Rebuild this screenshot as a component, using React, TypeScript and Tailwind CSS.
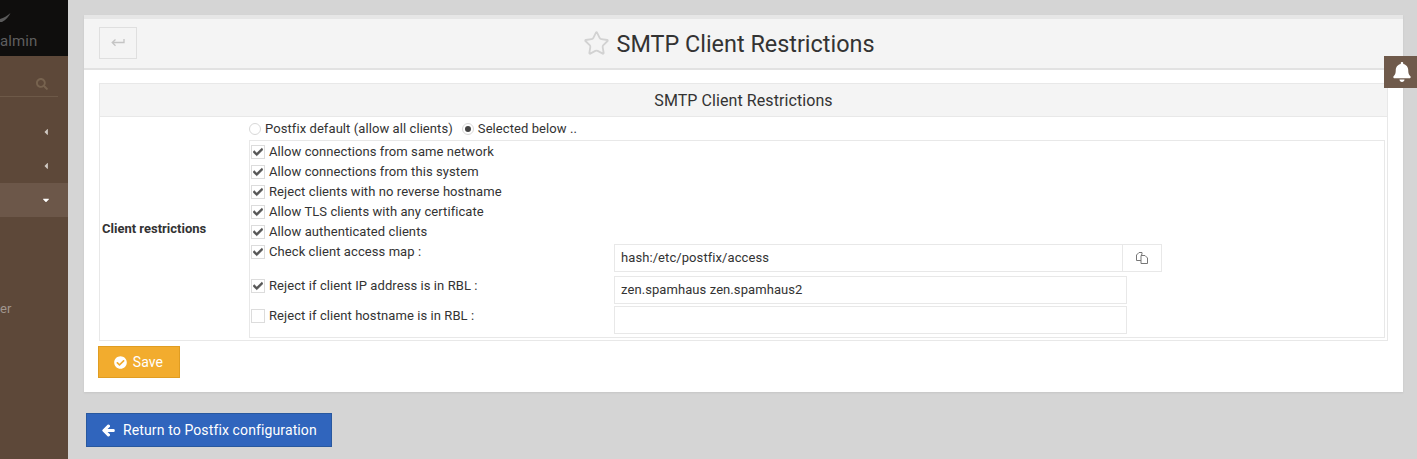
import React from 'react';
import { FaArrowLeft, FaBell, FaCaretDown, FaCaretLeft, FaCheck, FaCheckCircle, FaSearch } from 'react-icons/fa';
import { Star } from 'lucide-react';

const Check: React.FC<{ checked?: boolean }> = ({ checked = true }) => (
  <span className="w-[14px] h-[14px] border border-[#dcdcdc] bg-white flex items-center justify-center shrink-0">
    {checked && <FaCheck className="w-[10px] h-[10px] text-[#555]" stroke="currentColor" strokeWidth={30} />}
  </span>
);

const Radio: React.FC<{ checked?: boolean }> = ({ checked }) => (
  <span className="w-[12px] h-[12px] rounded-full border border-[#d8d8d8] bg-white flex items-center justify-center shrink-0">
    {checked && <span className="w-[6px] h-[6px] rounded-full bg-[#444]" />}
  </span>
);

const options = [
  'Allow connections from same network',
  'Allow connections from this system',
  'Reject clients with no reverse hostname',
  'Allow TLS clients with any certificate',
  'Allow authenticated clients',
];

const Sidebar = () => (
  <div className="w-[68px] shrink-0 bg-[#5d4839] flex flex-col overflow-hidden">
    <div className="h-[56px] bg-[#0f0e0d] relative">
      <svg viewBox="0 0 11 10" className="w-[11px] h-[10px] absolute left-0 top-[12px]">
        <path d="M0 7 C4 6 7 4 10.5 1 C9 4 6 8 2 10 L0 10 Z" fill="#5a5a5a" />
      </svg>
      <div className="pt-[31px] text-[15px] leading-[20px] text-[#5f5f5f]">almin</div>
    </div>
    <div className="h-[41px] flex items-center justify-end border-b border-[#6d5948] mr-[10px]">
      <FaSearch className="w-[12px] h-[12px] text-[#77634f] mr-[10px] mt-[16px]" />
    </div>
    <div className="h-[35px] mt-[17px] flex items-center justify-end pr-[18px]">
      <FaCaretLeft className="w-[8px] h-[10px] text-[#cfc8c2]" />
    </div>
    <div className="h-[33px] flex items-center justify-end pr-[18px]">
      <FaCaretLeft className="w-[8px] h-[10px] text-[#cfc8c2]" />
    </div>
    <div className="h-[34px] mt-[1px] bg-[#6c5749] flex items-center justify-end pr-[17px]">
      <FaCaretDown className="w-[10px] h-[10px] text-white" />
    </div>
    <div className="pt-[83px] text-[13px] leading-[18px] text-[#a0968e]">er</div>
  </div>
);

export default function App() {
  return (
    <div className="h-[459px] w-[1417px] overflow-hidden flex bg-[#d5d5d5] text-[13px] tracking-[0.08px] text-[#333] relative font-['Roboto',sans-serif]">
      <Sidebar />
      <div className="flex-1 pl-[16px] pr-[14px] pt-[15px]">
        <div className="bg-white border-t-[4px] border-[#e6e6e6] shadow-[0_1px_2px_rgba(0,0,0,0.08)]">
          {/* Page title */}
          <div className="h-[51px] bg-[#f4f4f4] border-b-2 border-[#e2e2e2] relative flex items-center justify-center pr-[30px]">
            <button className="absolute left-[15px] top-[8px] w-[38px] h-[32px] border border-[#dfdfdf] flex items-center justify-center">
              <svg viewBox="0 0 14 10" className="w-[14px] h-[10px]" fill="none" stroke="#c4c4c4" strokeWidth="1.3">
                <path d="M13 1 V4.5 H1.5 M4.5 1.5 L1.2 4.5 L4.5 7.8" />
              </svg>
            </button>
            <Star className="w-[27px] h-[27px] text-[#d2d2d2] mr-[7px]" strokeWidth={1.6} />
            <h1 className="text-[23.4px] tracking-normal leading-[32px] text-[#333]">SMTP Client Restrictions</h1>
          </div>

          <div className="pl-[15px] pr-[15px] pt-[13px] pb-[14px]">
            {/* Form table */}
            <div className="border border-[#e8e8e8]">
              <div className="h-[33px] pt-px bg-[#f4f4f4] border-b border-[#e8e8e8] flex items-center justify-center text-[16px]">
                SMTP Client Restrictions
              </div>
              <div className="flex h-[223px]">
                <div className="w-[149px] shrink-0 pl-[2px] flex items-center font-bold tracking-normal text-[#333]">
                  Client restrictions
                </div>
                <div className="flex-1 flex flex-col pr-[2px]">
                  <div className="h-[23px] flex items-center">
                    <Radio />
                    <span className="ml-[4px]">Postfix default (allow all clients)</span>
                    <span className="ml-[9px]"><Radio checked /></span>
                    <span className="ml-[4px]">Selected below ..</span>
                  </div>
                  <div className="border border-[#e8e8e8] h-[198px] pt-[1px] pl-[1px]">
                    {options.map(o => (
                      <div key={o} className="h-[20px] flex items-center gap-[4px]">
                        <Check />
                        <span>{o}</span>
                      </div>
                    ))}
                    <div className="h-[34px] flex">
                      <div className="w-[363px] h-[20px] flex items-center gap-[4px] shrink-0">
                        <Check />
                        <span>Check client access map :</span>
                      </div>
                      <div className="flex h-[28px] mt-[2px]">
                        <div className="w-[509px] border border-[#e8e8e8] flex items-center px-[6px] pb-px">hash:/etc/postfix/access</div>
                        <div className="w-[39px] border border-l-0 border-[#e8e8e8] flex items-center justify-center">
                          <svg viewBox="0 0 12 12" className="w-[12px] h-[12px]" fill="white" stroke="#777" strokeWidth="1">
                            <path d="M3 .5 H6 V2.5 H5.5 V8.5 H.5 V3 Z" />
                            <path d="M5 3.5 H9 L11.5 6 V11.5 H5 Z" />
                          </svg>
                        </div>
                      </div>
                    </div>
                    <div className="h-[30px] flex">
                      <div className="w-[363px] h-[20px] flex items-center gap-[4px] shrink-0">
                        <Check />
                        <span>Reject if client IP address is in RBL :</span>
                      </div>
                      <div className="w-[513px] h-[28px] border border-[#e8e8e8] flex items-center px-[6px] pb-px">zen.spamhaus zen.spamhaus2</div>
                    </div>
                    <div className="h-[30px] flex">
                      <div className="w-[363px] h-[20px] flex items-center gap-[4px] shrink-0">
                        <Check checked={false} />
                        <span>Reject if client hostname is in RBL :</span>
                      </div>
                      <div className="w-[513px] h-[28px] border border-[#e8e8e8]" />
                    </div>
                  </div>
                </div>
              </div>
            </div>
            <button className="mt-[5px] -ml-px w-[82px] h-[32px] bg-[#f2ac2e] border border-[#e09d22] text-white text-[14px] flex items-center justify-center gap-[6px] pr-px">
              <FaCheckCircle className="w-[13px] h-[13px]" />
              Save
            </button>
          </div>
        </div>
        <button className="mt-[21px] ml-[2px] w-[246px] h-[34px] bg-[#3065bd] border border-[#28589f] text-white text-[14px] tracking-[0.12px] flex items-center pl-[15px] gap-[8px]">
          <FaArrowLeft className="w-[13px] h-[13px]" stroke="currentColor" strokeWidth={40} />
          Return to Postfix configuration
        </button>
      </div>
      {/* Notification tab */}
      <div className="absolute right-0 top-[56px] w-[33px] h-[32px] bg-[#6f5a4b] flex items-center justify-center pl-[3px]">
        <FaBell className="w-[18px] h-[20px] text-white" />
      </div>
    </div>
  );
}
